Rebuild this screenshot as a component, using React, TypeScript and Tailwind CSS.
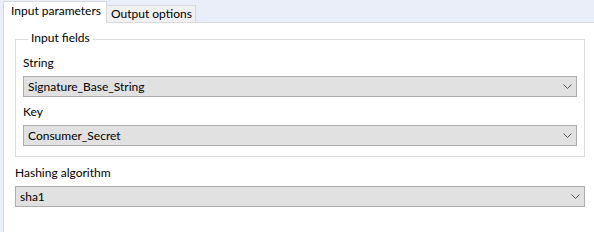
import React from "react";

function Chevron() {
  return (
    <svg width="9" height="5" viewBox="0 0 9 5" className="shrink-0">
      <polyline points="0.5,0.5 4.5,4.5 8.5,0.5" fill="none" stroke="#555555" strokeWidth="1" />
    </svg>
  );
}

function Select({ value, className }: { value: string; className: string }) {
  return (
    <div
      className={
        "h-[21px] bg-[#e1e1e1] border border-[#adadad] flex items-center justify-between pl-[4px] pr-[4px] " +
        className
      }
    >
      <span className="leading-[16px] text-black whitespace-nowrap">{value}</span>
      <Chevron />
    </div>
  );
}

export default function App() {
  return (
    <div className="w-[594px] h-[232px] bg-[#e9eef8] flex flex-col overflow-hidden font-['Lato',sans-serif] text-[12px] leading-[16px] text-black whitespace-nowrap">
      <div className="h-[22px] flex items-end pl-[3px] shrink-0">
        <div className="h-[22px] w-[104px] -mb-px bg-white border border-b-0 border-[#d9d9d9] pl-[7px] pt-[1px] relative z-10">
          Input parameters
        </div>
        <div className="h-[17px] w-[89px] bg-[#f0f0f0] border border-l-0 border-b-0 border-[#d9d9d9] pl-[4px]">
          Output options
        </div>
      </div>
      <div className="flex-1 ml-[3px] bg-white border-l border-t border-[#d9d9d9] pl-[11px] pt-[16px]">
        <div className="w-[570px] border border-[#dcdcdc] flex flex-col px-[7px] pb-[10px]">
          <span className="self-start -mt-[10px] ml-[5px] px-[3px] bg-white">Input fields</span>
          <span className="mt-[9px]">String</span>
          <Select value="Signature_Base_String" className="mt-[5px]" />
          <span className="mt-[7px]">Key</span>
          <Select value="Consumer_Secret" className="mt-[5px]" />
        </div>
        <div className="w-[570px] flex flex-col">
          <span className="mt-[8px]">Hashing algorithm</span>
          <Select value="sha1" className="mt-[5px]" />
        </div>
      </div>
    </div>
  );
}
